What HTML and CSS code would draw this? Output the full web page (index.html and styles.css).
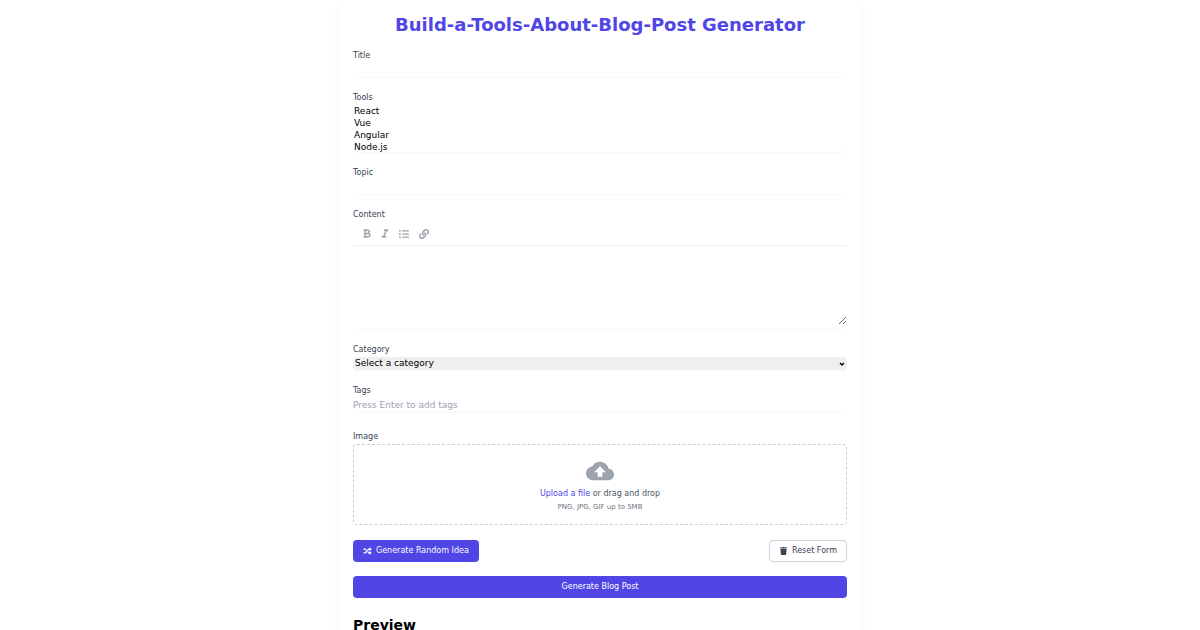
FILE: index.html
```html
<!DOCTYPE html>
<html lang="en">
<head>
    <meta charset="UTF-8">
    <meta name="viewport" content="width=device-width, initial-scale=1.0">
    <title>Build-a-Tools-About-Blog-Post Generator</title>
    <link rel="stylesheet" href="styles.css">
</head>
<body>
    <main class="card">
        <h1>Build-a-Tools-About-Blog-Post Generator</h1>
        <form class="form">
            <div class="field">
                <label for="title">Title</label>
                <input class="control" type="text" id="title" name="title">
            </div>

            <div class="field">
                <label for="tools">Tools</label>
                <select class="control tools" id="tools" name="tools" multiple size="4">
                    <option>React</option>
                    <option>Vue</option>
                    <option>Angular</option>
                    <option>Node.js</option>
                </select>
            </div>

            <div class="field">
                <label for="topic">Topic</label>
                <input class="control" type="text" id="topic" name="topic">
            </div>

            <div class="field">
                <label for="content">Content</label>
                <div class="editor">
                    <div class="toolbar">
                        <button type="button" aria-label="Bold">
                            <svg class="narrow" viewBox="0 0 384 512"><path d="M0 64c0-18 14-32 32-32h192c71 0 128 57 128 128 0 32-12 62-32 84 38 22 64 64 64 108 0 71-57 128-128 128H32c-18 0-32-14-32-32s14-32 32-32h16V96H32C14 96 0 82 0 64zm224 160c35 0 64-29 64-64s-29-64-64-64H112v128h112zM112 288v128h144c35 0 64-29 64-64s-29-64-64-64H112z"/></svg>
                        </button>
                        <button type="button" aria-label="Italic">
                            <svg class="narrow" viewBox="0 0 384 512"><path d="M128 64c0-18 14-32 32-32h192c18 0 32 14 32 32s-14 32-32 32h-59L160 416h64c18 0 32 14 32 32s-14 32-32 32H32c-18 0-32-14-32-32s14-32 32-32h59L224 96h-64c-18 0-32-14-32-32z"/></svg>
                        </button>
                        <button type="button" aria-label="List">
                            <svg class="wide" viewBox="0 0 512 512"><circle cx="48" cy="96" r="46"/><circle cx="48" cy="256" r="46"/><circle cx="48" cy="416" r="46"/><rect x="160" y="64" width="352" height="64" rx="32"/><rect x="160" y="224" width="352" height="64" rx="32"/><rect x="160" y="384" width="352" height="64" rx="32"/></svg>
                        </button>
                        <button type="button" aria-label="Link">
                            <svg class="wide" viewBox="0 0 512 512"><path d="M326.612 185.391c59.747 59.809 58.927 155.698.36 214.59-.11.12-.24.25-.36.37l-67.2 67.2c-59.27 59.27-155.699 59.262-214.96 0-59.27-59.26-59.27-155.7 0-214.96l37.106-37.106c9.84-9.84 26.786-3.3 27.294 10.606.648 17.722 3.826 35.527 9.69 52.721 1.986 5.822.567 12.262-3.783 16.612l-13.087 13.087c-28.026 28.026-28.905 73.66-1.155 101.96 28.024 28.579 74.086 28.749 102.325.51l67.2-67.19c28.191-28.191 28.073-73.757 0-101.83-3.701-3.694-7.429-6.564-10.341-8.569a16.037 16.037 0 0 1-6.947-12.606c-.396-10.567 3.348-21.456 11.698-29.806l21.054-21.055c5.521-5.521 14.182-6.199 20.584-1.731a152.482 152.482 0 0 1 20.522 17.197zM467.547 44.449c-59.261-59.262-155.69-59.27-214.96 0l-67.2 67.2c-.12.12-.25.25-.36.37-58.566 58.892-59.387 154.781.36 214.59a152.454 152.454 0 0 0 20.521 17.196c6.402 4.468 15.064 3.789 20.584-1.731l21.054-21.055c8.35-8.35 12.094-19.239 11.698-29.806a16.037 16.037 0 0 0-6.947-12.606c-2.912-2.005-6.64-4.875-10.341-8.569-28.073-28.073-28.191-73.639 0-101.83l67.2-67.19c28.239-28.239 74.3-28.069 102.325.51 27.75 28.3 26.872 73.934-1.155 101.96l-13.087 13.087c-4.35 4.35-5.769 10.79-3.783 16.612 5.864 17.194 9.042 34.999 9.69 52.721.509 13.906 17.454 20.446 27.294 10.606l37.106-37.106c59.271-59.259 59.271-155.699.001-214.959z"/></svg>
                        </button>
                    </div>
                    <textarea id="content" name="content"></textarea>
                </div>
            </div>

            <div class="field">
                <label for="category">Category</label>
                <select class="control category" id="category" name="category">
                    <option>Select a category</option>
                    <option>Development</option>
                    <option>Design</option>
                </select>
            </div>

            <div class="field tags">
                <label for="tags">Tags</label>
                <input class="control" type="text" id="tags" name="tags" placeholder="Press Enter to add tags">
            </div>

            <div class="field">
                <span class="label">Image</span>
                <div class="dropzone">
                    <svg class="cloud" viewBox="0 0 24 24"><path d="M19.35 10.04C18.67 6.59 15.64 4 12 4 9.11 4 6.6 5.64 5.35 8.04 2.34 8.36 0 10.91 0 14c0 3.31 2.69 6 6 6h13c2.76 0 5-2.24 5-5 0-2.64-2.05-4.78-4.65-4.96zM14 13v4h-4v-4H7l5-5 5 5h-3z"/></svg>
                    <p class="drop-text"><label class="upload" for="image">Upload a file</label> or drag and drop</p>
                    <input class="file" type="file" id="image" name="image" accept="image/*">
                    <p class="hint">PNG, JPG, GIF up to 5MB</p>
                </div>
            </div>

            <div class="actions">
                <button class="btn btn-primary" type="button">
                    <svg viewBox="0 0 512 512"><path d="M505 359c9 9 9 25 0 34l-80 80c-15 15-41 4-41-17v-40h-58c-4 0-7-1-9-4l-70-75 53-57 53 56h31v-40c0-21 26-32 41-17zM12 176h84l53 56 53-57-70-75c-2-3-5-4-9-4H12c-7 0-12 5-12 12v56c0 7 5 12 12 12zm372 0v40c0 21 26 32 41 17l80-80c9-9 9-25 0-34l-80-80c-15-15-41-4-41 17v40h-58c-4 0-7 1-9 4L96 336H12c-7 0-12 5-12 12v56c0 7 5 12 12 12h111c4 0 7-1 9-4l221-236z"/></svg>
                    Generate Random Idea
                </button>
                <button class="btn btn-outline" type="reset">
                    <svg viewBox="0 0 448 512"><path d="M432 32H312l-9-19c-4-8-12-13-22-13H167c-9 0-18 5-21 13l-10 19H16C7 32 0 39 0 48v32c0 9 7 16 16 16h416c9 0 16-7 16-16V48c0-9-7-16-16-16zM32 128l21 339c2 25 23 45 48 45h246c25 0 46-20 48-45l21-339z"/></svg>
                    Reset Form
                </button>
            </div>

            <button class="btn btn-primary" type="submit">Generate Blog Post</button>
        </form>

        <section class="preview">
            <h2>Preview</h2>
            <div id="preview"></div>
        </section>
    </main>
</body>
</html>
```

FILE: styles.css
```css
* {
    box-sizing: border-box;
}

body {
    margin: 0;
    background-color: #fff;
    color: #000;
    font-family: "DejaVu Sans", sans-serif;
    font-size: 9px;
    line-height: 14px;
}

h1, h2, p {
    margin: 0;
}

button, input, select, textarea {
    margin: 0;
    padding: 0;
    border: 0;
    color: inherit;
    font: inherit;
}

button {
    cursor: pointer;
}

svg {
    display: block;
    fill: currentColor;
}

.card {
    max-width: 522px;
    margin: 0 auto;
    padding: 14px;
    background-color: #fff;
    box-shadow: 0 6px 9px -2px rgba(0, 0, 0, 0.08), 0 2px 4px -1px rgba(0, 0, 0, 0.03);
}

h1 {
    margin-bottom: 14px;
    color: #4f46e5;
    font-size: 18px;
    line-height: 21px;
    text-align: center;
}

.form {
    display: flex;
    flex-direction: column;
    gap: 14px;
}

.field {
    display: flex;
    flex-direction: column;
    gap: 1px;
}

.field label, .label {
    color: #374151;
    font-size: 8px;
    line-height: 13px;
}

.control {
    width: 100%;
    background-color: #fff;
    border-radius: 4px;
    box-shadow: 0 1px 1px rgba(0, 0, 0, 0.03);
}

.control::placeholder {
    color: #9ca3af;
}

.tools {
    height: 47px;
    overflow: hidden;
}

.tools option {
    min-height: 0;
    padding: 1px;
}

.editor {
    padding-bottom: 4px;
    border-radius: 4px;
    box-shadow: 0 1px 1px rgba(0, 0, 0, 0.03);
}

.toolbar {
    display: flex;
    align-items: center;
    gap: 10px;
    height: 24px;
    padding: 0 10px;
    border-bottom: 1px solid #eceef0;
    color: #9ca3af;
}

.toolbar button {
    background: none;
}

.narrow {
    width: 8px;
    height: 9px;
    stroke: currentColor;
    stroke-width: 24;
}

.wide {
    width: 10px;
    height: 10px;
}

textarea {
    display: block;
    width: 100%;
    height: 79px;
    background: none;
    resize: vertical;
}

.category {
    height: 13px;
    padding: 0 2px;
    appearance: none;
    background: #efefef url("data:image/svg+xml,%3Csvg xmlns='http://www.w3.org/2000/svg' viewBox='0 0 6 4'%3E%3Cpath d='M1 1l2 2 2-2' fill='none' stroke='black' stroke-width='1.4'/%3E%3C/svg%3E") no-repeat right 2px center / 6px 4px;
    line-height: 13px;
}

.tags {
    margin-bottom: 4px;
}

.dropzone {
    display: flex;
    flex-direction: column;
    align-items: center;
    gap: 3px;
    padding: 12px;
    border: 1px dashed #c9cdd4;
    border-radius: 4px;
}

.cloud {
    width: 28px;
    height: 28px;
    color: #9ca3af;
}

.drop-text, .drop-text .upload {
    color: #4b5563;
    font-size: 8px;
    line-height: 12px;
}

.drop-text .upload {
    color: #4f46e5;
    cursor: pointer;
}

.file {
    display: none;
}

.hint {
    color: #6b7280;
    font-size: 7px;
    line-height: 9px;
}

.actions {
    display: flex;
    justify-content: space-between;
    margin-top: 1px;
}

.btn {
    display: flex;
    align-items: center;
    justify-content: center;
    gap: 4px;
    padding: 4px 9px;
    border: 1px solid transparent;
    border-radius: 4px;
    font-size: 8px;
    line-height: 12px;
}

.btn svg {
    width: 9px;
    height: 8px;
}

.btn-primary {
    background-color: #4f46e5;
    color: #fff;
}

.btn-outline {
    background-color: #fff;
    border-color: #d1d5db;
    color: #374151;
}

.preview {
    margin-top: 18px;
}

h2 {
    font-size: 14px;
    line-height: 19px;
}
```
